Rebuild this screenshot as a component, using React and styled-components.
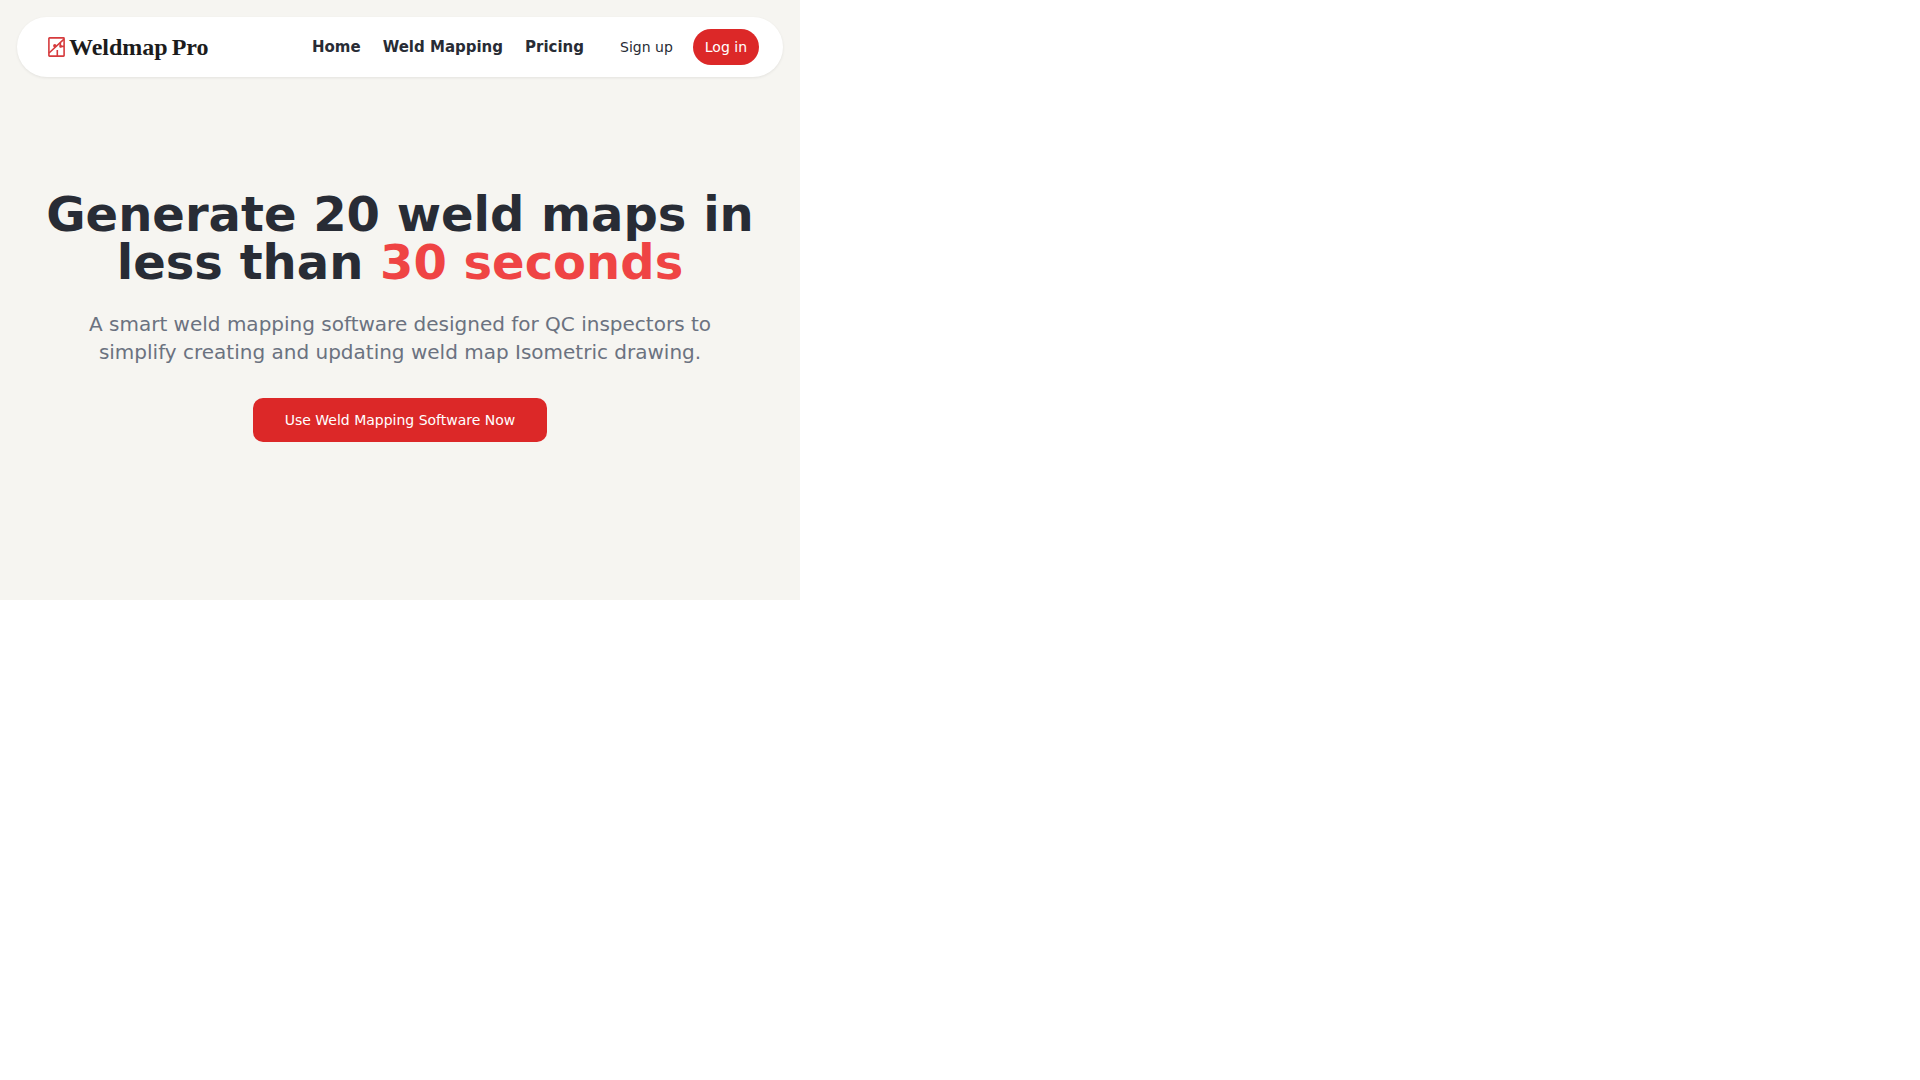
import React from "react";
import styled, { createGlobalStyle } from "styled-components";

const GlobalStyle = createGlobalStyle`
  *, *::before, *::after { box-sizing: border-box; }
  body {
    margin: 0;
    background: #ffffff;
    color: #282c35;
    font-family: "DejaVu Sans", sans-serif;
    font-size: 14px;
    line-height: 20px;
  }
`;

const Page = styled.div`
  display: flex;
  flex-direction: column;
  max-width: 800px;
  min-height: 600px;
  padding: 17px;
  background: #f6f5f1;
`;

const Header = styled.header`
  display: flex;
  align-items: center;
  justify-content: space-between;
  padding: 12px 24px 12px 31px;
  border-radius: 32px;
  background: #ffffff;
  box-shadow: 0 1px 3px rgba(0, 0, 0, 0.08);
`;

const Brand = styled.a`
  display: flex;
  align-items: center;
  gap: 4px;
  color: #1c1c1c;
  font-family: "Liberation Serif", serif;
  font-size: 24px;
  font-weight: 700;
  line-height: 24px;
  text-decoration: none;
`;

const Nav = styled.nav`
  display: flex;
  align-items: center;
  gap: 22px;
`;

const NavLink = styled.a`
  color: #282c35;
  font-size: 15px;
  font-weight: 700;
  text-decoration: none;
`;

const Account = styled.div`
  display: flex;
  align-items: center;
  gap: 8px;
  padding-left: 2px;
`;

const AccountButton = styled.button`
  padding: 8px 12px;
  border: 0;
  border-radius: 18px;
  background: ${({ $filled }) => ($filled ? "#dc2828" : "transparent")};
  color: ${({ $filled }) => ($filled ? "#ffffff" : "#282c35")};
  font: inherit;
  cursor: pointer;
`;

const Hero = styled.main`
  display: flex;
  flex-direction: column;
  align-items: center;
  padding: 113px 16px 64px;
  text-align: center;
`;

const Title = styled.h1`
  margin: 0;
  font-size: 48px;
  font-weight: 700;
  line-height: 48px;
`;

const Highlight = styled.span`
  color: #ef4444;
`;

const Lead = styled.p`
  max-width: 672px;
  margin: 24px 0 32px;
  color: #6b7280;
  font-size: 20px;
  line-height: 28px;
`;

const CallToAction = styled.button`
  padding: 12px 32px;
  border: 0;
  border-radius: 10px;
  background: #dc2828;
  color: #ffffff;
  font: inherit;
  cursor: pointer;
`;

function DrawingMark() {
  return (
    <svg width="17" height="20" viewBox="0 0 17 20" fill="none" stroke="#d63b3d" strokeWidth="1.6" aria-hidden="true">
      <rect x="0.9" y="0.9" width="15.2" height="18.2" rx="0.6" />
      <path d="M1 16 16 2.2M6.8 8v3M12 9.4h4M12.4 6v3M9.3 13v6" />
      <circle cx="6.8" cy="8.8" r="0.9" fill="#d63b3d" />
      <circle cx="12.6" cy="9.4" r="0.6" fill="#d63b3d" />
    </svg>
  );
}

const links = ["Home", "Weld Mapping", "Pricing"];

export default function App() {
  return (
    <>
      <GlobalStyle />
      <Page>
        <Header>
          <Brand href="#">
            <DrawingMark />
            <span>Weldmap</span>
            <span>Pro</span>
          </Brand>
          <Nav>
            {links.map((label) => (
              <NavLink key={label} href="#">{label}</NavLink>
            ))}
            <Account>
              <AccountButton type="button">Sign up</AccountButton>
              <AccountButton type="button" $filled>Log in</AccountButton>
            </Account>
          </Nav>
        </Header>
        <Hero>
          <Title>
            Generate 20 weld maps in less than <Highlight>30 seconds</Highlight>
          </Title>
          <Lead>
            A smart weld mapping software designed for QC inspectors to simplify
            creating and updating weld map Isometric drawing.
          </Lead>
          <CallToAction type="button">Use Weld Mapping Software Now</CallToAction>
        </Hero>
      </Page>
    </>
  );
}
